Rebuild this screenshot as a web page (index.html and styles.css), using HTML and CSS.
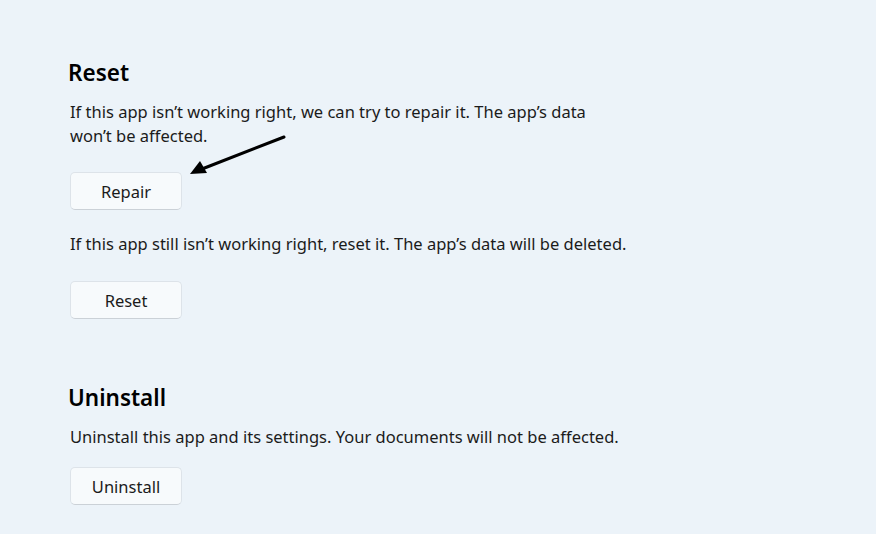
FILE: index.html
```html
<!DOCTYPE html>
<html lang="en">
<head>
  <meta charset="UTF-8">
  <meta name="viewport" content="width=device-width, initial-scale=1.0">
  <title>App settings</title>
  <link rel="stylesheet" href="styles.css">
</head>
<body>
  <div class="page">
    <!-- Reset section -->
    <section class="section">
      <h2>Reset</h2>
      <p class="desc narrow">If this app isn’t working right, we can try to repair it. The app’s data won’t be affected.</p>
      <div class="btn-row">
        <button class="btn">Repair</button>
        <svg class="arrow" width="110" height="50" viewBox="0 0 110 50">
          <line x1="104" y1="4" x2="22" y2="36" stroke="#000" stroke-width="3" stroke-linecap="round"/>
          <polygon points="10,41 20,28 27,40" fill="#000"/>
        </svg>
      </div>
      <p class="desc after-btn">If this app still isn’t working right, reset it. The app’s data will be deleted.</p>
      <div class="btn-row">
        <button class="btn">Reset</button>
      </div>
    </section>

    <!-- Uninstall section -->
    <section class="section uninstall">
      <h2>Uninstall</h2>
      <p class="desc">Uninstall this app and its settings. Your documents will not be affected.</p>
      <div class="btn-row">
        <button class="btn">Uninstall</button>
      </div>
    </section>
  </div>
</body>
</html>
```

FILE: styles.css
```css
body {
  margin: 0;
  font-family: "Noto Sans", "Open Sans", sans-serif;
  background-color: #ecf3f9;
  color: #1b1b1b;
}
.page {
  padding: 56px 0 0 70px;
}
.section h2 {
  margin: 0 0 0 -2px;
  font-size: 22.5px;
  font-weight: 600;
  line-height: 34px;
  color: #000;
}
.desc {
  margin: 10px 0 0;
  font-size: 16.5px;
  line-height: 24px;
}
.narrow {
  max-width: 540px;
}
.desc.after-btn {
  margin-top: 22px;
}
.btn-row {
  position: relative;
  margin-top: 24px;
}
.after-btn + .btn-row {
  margin-top: 25px;
}
.btn {
  display: block;
  width: 112px;
  height: 38px;
  margin: 0;
  padding: 0;
  font-family: inherit;
  font-size: 16.5px;
  color: #1b1b1b;
  background-color: #f7fafc;
  border: 1px solid #dde3e9;
  border-bottom-color: #cbd1d7;
  border-radius: 5px;
}
.arrow {
  position: absolute;
  left: 110px;
  top: -39px;
}
.uninstall {
  margin-top: 62px;
}
.uninstall .btn-row {
  margin-top: 18px;
}
```
